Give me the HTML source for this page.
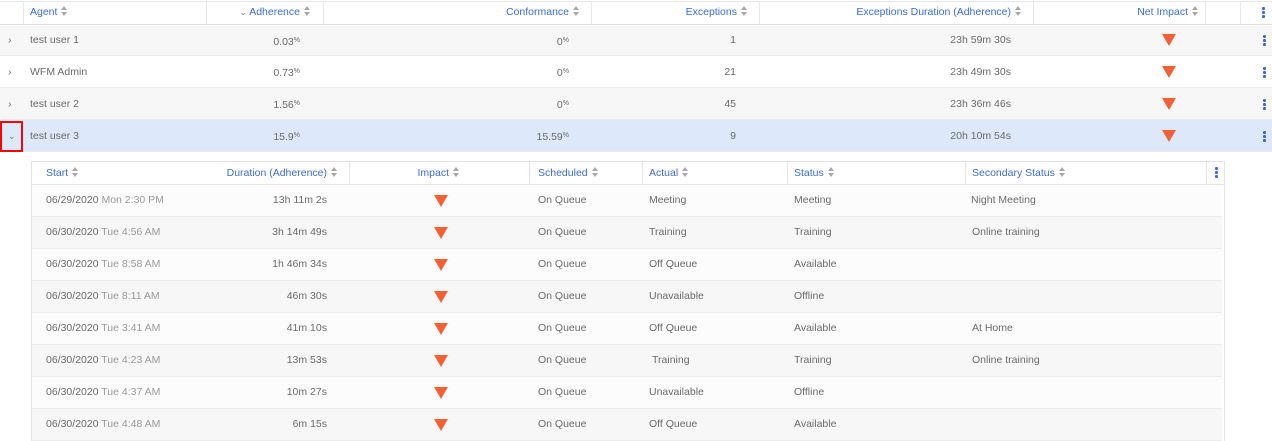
<!DOCTYPE html>
<html><head><meta charset="utf-8"><style>
*{margin:0;padding:0;box-sizing:border-box}
body{width:1272px;height:440px;overflow:hidden;background:#fff;font-family:"Liberation Sans",Arial,sans-serif;font-size:10.5px;color:#6a6a6a;position:relative}
.a{position:absolute;white-space:nowrap}
.hd{color:#3c6cd0}
.r{position:absolute;left:0;width:1272px;height:32px;border-bottom:1px solid #ececec}
.t{position:absolute;white-space:nowrap;line-height:32px;top:0}
.vl{position:absolute;width:1px;background:#e6e6e6}
.s{display:inline-block;width:6px;height:10px;vertical-align:-1px;margin-left:4px}
.tri{position:absolute;width:0;height:0;border-left:7px solid transparent;border-right:7px solid transparent;border-top:12px solid #f26135}
.keb{position:absolute;width:3px}
.keb i{display:block;width:3px;height:3px;background:#3c6cd0;margin-bottom:1px;border-radius:1px}
sup{font-size:7px;vertical-align:3px}
.g{color:#999}
</style></head><body>
<div class="a" style="left:0;top:1px;width:1272px;height:1px;background:#e8e8e8"></div>
<div class="a" style="left:0;top:24px;width:1272px;height:1px;background:#e3e3e3"></div>
<div class="vl" style="left:23px;top:2px;height:22px"></div>
<div class="vl" style="left:206px;top:2px;height:22px"></div>
<div class="vl" style="left:323px;top:2px;height:22px"></div>
<div class="vl" style="left:591px;top:2px;height:22px"></div>
<div class="vl" style="left:759px;top:2px;height:22px"></div>
<div class="vl" style="left:1033px;top:2px;height:22px"></div>
<div class="vl" style="left:1205px;top:2px;height:22px"></div>
<div class="vl" style="left:1240px;top:2px;height:22px"></div>
<svg width="0" height="0" style="position:absolute"><defs><symbol id="so" viewBox="0 0 6 10"><path d="M0 4L3 0L6 4Z M0 6L3 10L6 6Z" fill="#a8a8a8"/></symbol></defs></svg>
<div class="a hd" style="left:30px;top:0;line-height:25px">Agent<svg class="s"><use href="#so"/></svg></div>
<div class="a hd" style="right:962px;top:0;line-height:25px"><span style="color:#777;font-size:9px">&#8964;</span> Adherence<svg class="s"><use href="#so"/></svg></div>
<div class="a hd" style="right:693px;top:0;line-height:25px">Conformance<svg class="s"><use href="#so"/></svg></div>
<div class="a hd" style="right:525px;top:0;line-height:25px">Exceptions<svg class="s"><use href="#so"/></svg></div>
<div class="a hd" style="right:251px;top:0;line-height:25px">Exceptions Duration (Adherence)<svg class="s"><use href="#so"/></svg></div>
<div class="a hd" style="right:74px;top:0;line-height:25px">Net Impact<svg class="s"><use href="#so"/></svg></div>
<div class="keb" style="left:1262px;top:7px"><i></i><i></i><i></i></div>

<div class="r" style="top:25px;height:31px;background:#f7f7f7">
 <span class="t" style="left:8px;line-height:31px;color:#777">&#8250;</span>
 <span class="t" style="left:30px;line-height:31px">test user 1</span>
 <span class="t" style="right:972px;line-height:31px">0.03<sup>%</sup></span>
 <span class="t" style="right:703px;line-height:31px">0<sup>%</sup></span>
 <span class="t" style="right:536px;line-height:31px">1</span>
 <span class="t" style="right:261px;line-height:31px">23h 59m 30s</span>
 <div class="tri" style="left:1162px;top:9px"></div>
 <div class="keb" style="left:1263px;top:10px"><i></i><i></i><i></i></div>
</div>
<div class="r" style="top:56px;background:#fff">
 <span class="t" style="left:8px;color:#777">&#8250;</span>
 <span class="t" style="left:30px">WFM Admin</span>
 <span class="t" style="right:972px">0.73<sup>%</sup></span>
 <span class="t" style="right:703px">0<sup>%</sup></span>
 <span class="t" style="right:536px">21</span>
 <span class="t" style="right:261px">23h 49m 30s</span>
 <div class="tri" style="left:1162px;top:10px"></div>
 <div class="keb" style="left:1263px;top:11px"><i></i><i></i><i></i></div>
</div>
<div class="r" style="top:88px;background:#f7f7f7">
 <span class="t" style="left:8px;color:#777">&#8250;</span>
 <span class="t" style="left:30px">test user 2</span>
 <span class="t" style="right:972px">1.56<sup>%</sup></span>
 <span class="t" style="right:703px">0<sup>%</sup></span>
 <span class="t" style="right:536px">45</span>
 <span class="t" style="right:261px">23h 36m 46s</span>
 <div class="tri" style="left:1162px;top:10px"></div>
 <div class="keb" style="left:1263px;top:11px"><i></i><i></i><i></i></div>
</div>
<div class="r" style="top:120px;background:#dde8fb;border-bottom-color:#e4ebf7">
 <div class="a" style="left:0px;top:1px;width:23px;height:31px;border:2px solid #f00"></div>
 <span class="t" style="left:8px;color:#777;font-size:9px">&#8964;</span>
 <span class="t" style="left:30px">test user 3</span>
 <span class="t" style="right:972px">15.9<sup>%</sup></span>
 <span class="t" style="right:703px">15.59<sup>%</sup></span>
 <span class="t" style="right:536px">9</span>
 <span class="t" style="right:261px">20h 10m 54s</span>
 <div class="tri" style="left:1162px;top:10px"></div>
 <div class="keb" style="left:1263px;top:11px"><i></i><i></i><i></i></div>
</div>

<div class="a" style="left:31px;top:161px;width:1194px;height:280px;border:1px solid #e3e3e3;border-bottom:none;background:#fff"></div>
<div class="a" style="left:32px;top:184px;width:1192px;height:1px;background:#e3e3e3"></div>
<div class="vl" style="left:349px;top:162px;height:22px"></div>
<div class="vl" style="left:529px;top:162px;height:22px"></div>
<div class="vl" style="left:642px;top:162px;height:22px"></div>
<div class="vl" style="left:787px;top:162px;height:22px"></div>
<div class="vl" style="left:965px;top:162px;height:22px"></div>
<div class="vl" style="left:1206px;top:162px;height:22px"></div>
<div class="a hd" style="left:46px;top:162px;line-height:22px">Start<svg class="s"><use href="#so"/></svg></div>
<div class="a hd" style="right:935px;top:162px;line-height:22px">Duration (Adherence)<svg class="s"><use href="#so"/></svg></div>
<div class="a hd" style="right:813px;top:162px;line-height:22px">Impact<svg class="s"><use href="#so"/></svg></div>
<div class="a hd" style="left:538px;top:162px;line-height:22px">Scheduled<svg class="s"><use href="#so"/></svg></div>
<div class="a hd" style="left:649px;top:162px;line-height:22px">Actual<svg class="s"><use href="#so"/></svg></div>
<div class="a hd" style="left:794px;top:162px;line-height:22px">Status<svg class="s"><use href="#so"/></svg></div>
<div class="a hd" style="left:972px;top:162px;line-height:22px">Secondary Status<svg class="s"><use href="#so"/></svg></div>
<div class="keb" style="left:1215px;top:167px"><i></i><i></i><i></i></div>

<div style="position:absolute;left:32px;top:185px;width:1190px">
<style>.n{position:relative;height:32px;border-bottom:1px solid #ececec}.n .t{line-height:31px}.n:nth-child(odd){background:#f7f7f7}.n:nth-child(even){background:#fcfcfc}</style>
<div class="n"><span class="t" style="left:14px">06/29/2020 <span class="g">Mon 2:30 PM</span></span><span class="t" style="right:895px">13h 11m 2s</span><div class="tri" style="left:402px;top:10px"></div><span class="t" style="left:506px">On Queue</span><span class="t" style="left:617px">Meeting</span><span class="t" style="left:762px">Meeting</span><span class="t" style="left:939px">Night Meeting</span></div>
<div class="n"><span class="t" style="left:14px">06/30/2020 <span class="g">Tue 4:56 AM</span></span><span class="t" style="right:895px">3h 14m 49s</span><div class="tri" style="left:402px;top:10px"></div><span class="t" style="left:506px">On Queue</span><span class="t" style="left:617px">Training</span><span class="t" style="left:762px">Training</span><span class="t" style="left:940px">Online training</span></div>
<div class="n"><span class="t" style="left:14px">06/30/2020 <span class="g">Tue 8:58 AM</span></span><span class="t" style="right:895px">1h 46m 34s</span><div class="tri" style="left:402px;top:10px"></div><span class="t" style="left:506px">On Queue</span><span class="t" style="left:617px">Off Queue</span><span class="t" style="left:762px">Available</span></div>
<div class="n"><span class="t" style="left:14px">06/30/2020 <span class="g">Tue 8:11 AM</span></span><span class="t" style="right:895px">46m 30s</span><div class="tri" style="left:402px;top:10px"></div><span class="t" style="left:506px">On Queue</span><span class="t" style="left:617px">Unavailable</span><span class="t" style="left:762px">Offline</span></div>
<div class="n"><span class="t" style="left:14px">06/30/2020 <span class="g">Tue 3:41 AM</span></span><span class="t" style="right:895px">41m 10s</span><div class="tri" style="left:402px;top:10px"></div><span class="t" style="left:506px">On Queue</span><span class="t" style="left:617px">Off Queue</span><span class="t" style="left:762px">Available</span><span class="t" style="left:940px">At Home</span></div>
<div class="n"><span class="t" style="left:14px">06/30/2020 <span class="g">Tue 4:23 AM</span></span><span class="t" style="right:895px">13m 53s</span><div class="tri" style="left:402px;top:10px"></div><span class="t" style="left:506px">On Queue</span><span class="t" style="left:620px">Training</span><span class="t" style="left:762px">Training</span><span class="t" style="left:940px">Online training</span></div>
<div class="n"><span class="t" style="left:14px">06/30/2020 <span class="g">Tue 4:37 AM</span></span><span class="t" style="right:895px">10m 27s</span><div class="tri" style="left:402px;top:10px"></div><span class="t" style="left:506px">On Queue</span><span class="t" style="left:617px">Unavailable</span><span class="t" style="left:762px">Offline</span></div>
<div class="n"><span class="t" style="left:14px">06/30/2020 <span class="g">Tue 4:48 AM</span></span><span class="t" style="right:895px">6m 15s</span><div class="tri" style="left:402px;top:10px"></div><span class="t" style="left:506px">On Queue</span><span class="t" style="left:617px">Off Queue</span><span class="t" style="left:762px">Available</span></div>
</div>
</body></html>
